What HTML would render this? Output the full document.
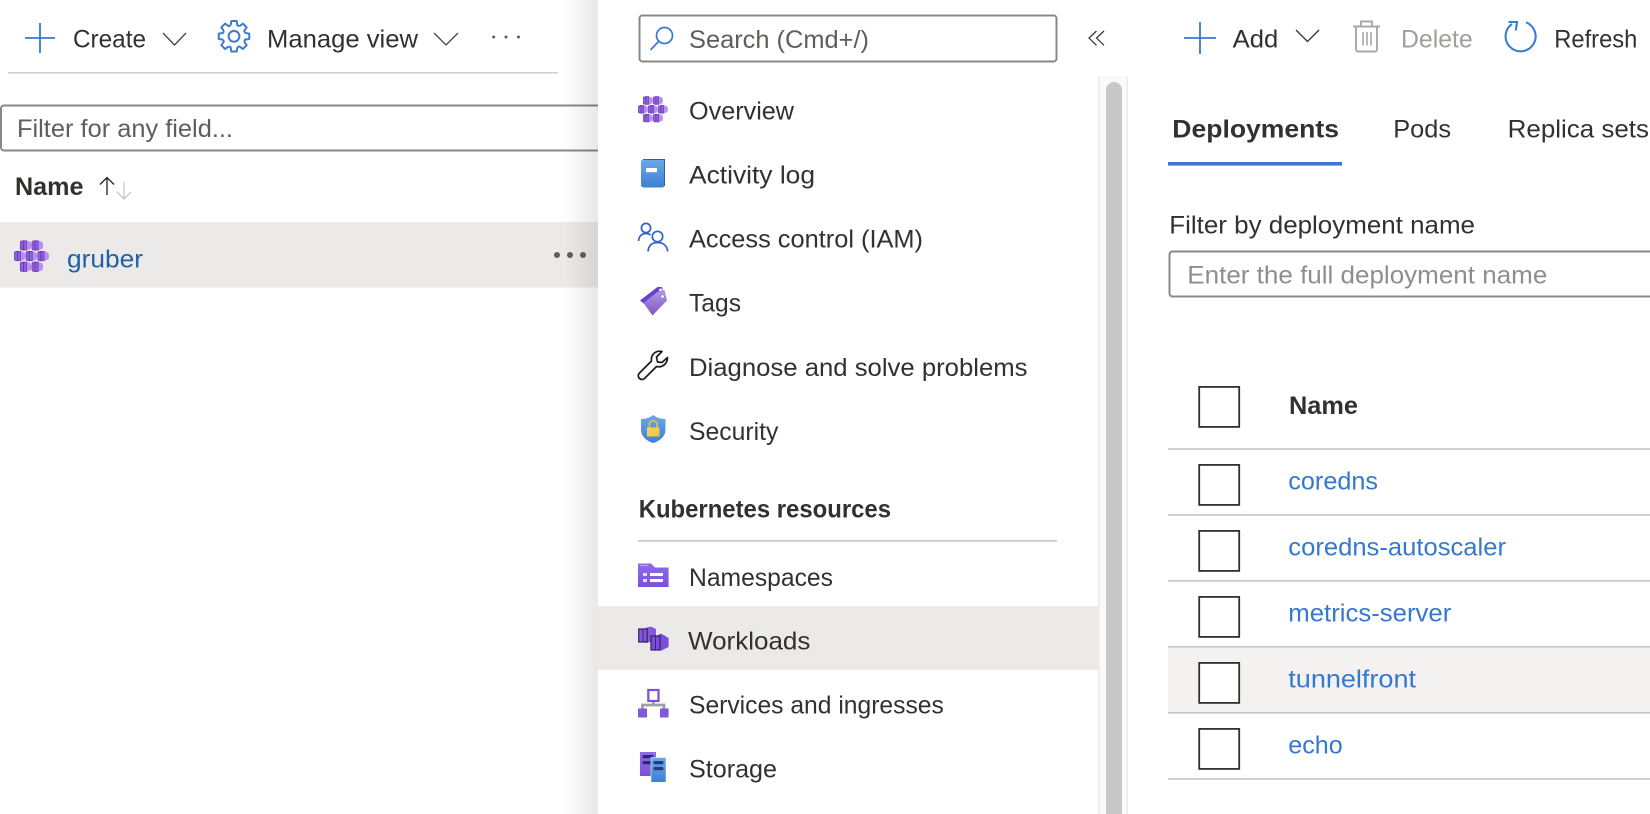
<!DOCTYPE html>
<html lang="en">
<head>
<meta charset="utf-8">
<title>Kubernetes services - Workloads</title>
<style>
html,body{margin:0;padding:0;background:#fff;width:1650px;height:814px;overflow:hidden}
svg{display:block}
text{font-family:"Liberation Sans",Arial,sans-serif;font-size:25px;fill:#323130}
.b{font-weight:700}
.l{fill:#3578d0}
.g{fill:#605e5c}
</style>
</head>
<body>
<svg width="1650" height="814" viewBox="0 0 1650 814" xmlns="http://www.w3.org/2000/svg">
<defs>
<linearGradient id="sh" x1="0" x2="1" y1="0" y2="0"><stop offset="0" stop-color="#000" stop-opacity="0"/><stop offset="1" stop-color="#000" stop-opacity=".09"/></linearGradient>
<linearGradient id="pur" x1="0" x2="0" y1="0" y2="1"><stop offset="0" stop-color="#8f6ce6"/><stop offset="1" stop-color="#7a52da"/></linearGradient>
<linearGradient id="tag" x1="0" x2="0" y1="0" y2="1"><stop offset="0" stop-color="#b09ade"/><stop offset="1" stop-color="#8355c8"/></linearGradient>
<linearGradient id="blu" x1="0" x2="0" y1="0" y2="1"><stop offset="0" stop-color="#6aa8ee"/><stop offset="1" stop-color="#3f7fd2"/></linearGradient>
<linearGradient id="yel" x1="0" x2="1" y1="0" y2="1"><stop offset="0" stop-color="#f7d85e"/><stop offset="1" stop-color="#edc040"/></linearGradient>
<g id="c">
<path d="M2 .6H6.5L9.4 1.8L10 4.5L9.4 7.2L6.5 8.4H2z" fill="#bb8cf2"/>
<path d="M.4 1.3L2 .6H5.6V8.4H2L.4 7.7z" fill="#8f62da" stroke="#6238ae" stroke-width=".6"/>
<path d="M3 1V8" stroke="#532e9c" stroke-width=".6"/>
</g>
<g id="kube">
<use href="#c" x="5" y="0"/><use href="#c" x="15" y="0"/>
<use href="#c" x="0" y="8.8"/><use href="#c" x="10" y="8.8"/><use href="#c" x="20" y="8.8"/>
<use href="#c" x="5" y="17.6"/><use href="#c" x="15" y="17.6"/>
</g>
<polyline id="tooth" points="11,-3.36 15.26,-2.69 15.26,2.69 11,3.36 10.15,5.4" fill="none" stroke="#3b7cd2" stroke-width="2" stroke-linejoin="round"/>
</defs>

<!-- left pane -->
<path d="M25 38H55M40 23V53" stroke="#3a78d0" stroke-width="1.8" fill="none"/>
<text x="73" y="47.5" textLength="73" lengthAdjust="spacingAndGlyphs">Create</text>
<polyline points="163,33 174.5,45 186,33" fill="none" stroke="#484644" stroke-width="1.3"/>
<g transform="translate(234,36.3)">
<use href="#tooth"/><use href="#tooth" transform="rotate(45)"/><use href="#tooth" transform="rotate(90)"/><use href="#tooth" transform="rotate(135)"/><use href="#tooth" transform="rotate(180)"/><use href="#tooth" transform="rotate(225)"/><use href="#tooth" transform="rotate(270)"/><use href="#tooth" transform="rotate(315)"/>
<circle r="5.4" fill="none" stroke="#3b7cd2" stroke-width="2"/>
</g>
<text x="267" y="47.5" textLength="151" lengthAdjust="spacingAndGlyphs">Manage view</text>
<polyline points="434,33 446,45 458,33" fill="none" stroke="#484644" stroke-width="1.3"/>
<circle cx="493.7" cy="37" r="1.5" fill="#605e5c"/><circle cx="506" cy="37" r="1.5" fill="#605e5c"/><circle cx="518.5" cy="37" r="1.5" fill="#605e5c"/>
<rect x="8" y="72" width="550" height="1.6" fill="#d2d0ce"/>

<rect x="1" y="105.5" width="640" height="45" rx="3" fill="#fff" stroke="#8a8886" stroke-width="2"/>
<text x="17" y="137" textLength="216" lengthAdjust="spacingAndGlyphs" class="g">Filter for any field...</text>

<text x="15" y="195" textLength="68.5" lengthAdjust="spacingAndGlyphs" class="b">Name</text>
<path d="M107 195V177.5M100 184.5L107 177.5L114 184.5" fill="none" stroke="#201f1e" stroke-width="1.3"/>
<path d="M124 182V199M117 192L124 199L131 192" fill="none" stroke="#c8c6c4" stroke-width="1.3"/>

<rect x="0" y="222" width="600" height="65.5" fill="#ebeae9"/>
<use href="#kube" transform="translate(14,240) scale(1.17,1.21)"/>
<text x="67" y="267.7" textLength="76" lengthAdjust="spacingAndGlyphs" style="fill:#2260a8">gruber</text>
<circle cx="557" cy="255" r="3" fill="#605e5c"/><circle cx="570" cy="255" r="3" fill="#605e5c"/><circle cx="583" cy="255" r="3" fill="#605e5c"/>

<!-- shadow -->
<rect x="563" y="0" width="35" height="814" fill="url(#sh)"/>
<rect x="598" y="0" width="1052" height="814" fill="#fff"/>

<!-- nav -->
<rect x="639.5" y="15.5" width="417" height="46" rx="3" fill="#fff" stroke="#8a8886" stroke-width="2"/>
<circle cx="664.5" cy="35.5" r="8" fill="none" stroke="#3a78d0" stroke-width="1.7"/>
<path d="M658.8 41.2L650.5 50" stroke="#3a78d0" stroke-width="1.7" fill="none"/>
<text x="689" y="48" textLength="180" lengthAdjust="spacingAndGlyphs" class="g">Search (Cmd+/)</text>
<path d="M1096.5 31L1089 38L1096.5 45.3M1104 31L1096.5 38L1104 45.3" fill="none" stroke="#323130" stroke-width="1.2"/>

<rect x="1098" y="76" width="30" height="738" fill="#fafafa"/>
<rect x="1098" y="76" width="1.6" height="738" fill="#ececec"/>
<rect x="1126.4" y="76" width="1.6" height="738" fill="#ececec"/>
<rect x="1106" y="82" width="16" height="750" rx="8" fill="#c8c8c8"/>

<rect x="598" y="606" width="500" height="64" fill="#ebeae8"/>

<use href="#kube" transform="translate(638,96)"/>
<text x="689" y="119.3" textLength="105" lengthAdjust="spacingAndGlyphs">Overview</text>

<rect x="641" y="159.5" width="23.5" height="28" rx="2.5" fill="url(#blu)"/>
<path d="M643 159.5H664.5V186" fill="none" stroke="#2f5f9e" stroke-width="1"/>
<rect x="646" y="168" width="11" height="4.2" fill="#fff"/>
<text x="689" y="183.3" textLength="126" lengthAdjust="spacingAndGlyphs">Activity log</text>

<g fill="none" stroke="#2f62cc" stroke-width="1.7">
<circle cx="646" cy="228" r="4.6"/>
<path d="M638.5 241C639 236 642 233.5 646 233.5C648 233.5 649.5 234 650.5 235"/>
<circle cx="657.5" cy="236.5" r="5.2"/>
<path d="M648 251.5C648.5 245.5 652 242.5 657.5 242.5C663 242.5 667 245.5 667.8 251.5"/>
</g>
<text x="689" y="247.7" textLength="234" lengthAdjust="spacingAndGlyphs">Access control (IAM)</text>

<path d="M640 300.5L657.5 287H662L664 296L648 307z" fill="#6b3fd4"/>
<path d="M643.5 303L658 291.5L664.5 290L667 300.5L652.5 315.5z" fill="url(#tag)"/>
<circle cx="660.5" cy="290" r="1.7" fill="#fff" stroke="#6b3fd4" stroke-width=".5"/>
<circle cx="662.5" cy="296.5" r="1.7" fill="#fff" stroke="#8f70cc" stroke-width=".5"/>
<text x="689" y="311.4" textLength="52" lengthAdjust="spacingAndGlyphs">Tags</text>

<path d="M662 351.5C656 350 650.5 354.5 651.5 361L639.5 373A3.6 3.6 0 0 0 644.5 378.5L656.5 366.5C662.5 368 667.5 363.5 667.5 357.5L662 362.5L657.5 362L656.5 357Z" fill="#fff" stroke="#1a1a1a" stroke-width="1.7" stroke-linejoin="round"/>
<text x="689" y="375.8" textLength="338.5" lengthAdjust="spacingAndGlyphs">Diagnose and solve problems</text>

<path d="M653.2 415C657 418 661 419 665.5 419V430C665.5 436 660 441 653.2 443C646.5 441 641 436 641 430V419C645.5 419 649.5 418 653.2 415Z" fill="url(#blu)"/>
<path d="M649.5 428V424.5A3.7 3.7 0 0 1 657 424.5V428" fill="none" stroke="#e8b93a" stroke-width="1.8"/>
<rect x="647" y="427.5" width="12.5" height="9" fill="url(#yel)"/>
<text x="689" y="440" textLength="89.4" lengthAdjust="spacingAndGlyphs">Security</text>

<text x="638.7" y="517.3" textLength="252.3" lengthAdjust="spacingAndGlyphs" class="b">Kubernetes resources</text>
<rect x="638" y="540" width="419" height="1.6" fill="#c8c6c4"/>

<path d="M638 563.5H651L655 567.5H668.6V587H638z" fill="url(#pur)"/>
<path d="M640 565.5H648" stroke="#b8a2ee" stroke-width="1.2"/>
<path d="M650 574.5H663M650 580.5H663" stroke="#fff" stroke-width="3"/>
<path d="M643 574.5H647M643 580.5H647" stroke="#e6ddfa" stroke-width="3"/>
<text x="689" y="586" textLength="144" lengthAdjust="spacingAndGlyphs">Namespaces</text>

<path d="M645 628L651 626.5L656 629V641L645 643z" fill="#8458d8"/>
<rect x="638.7" y="629" width="8.5" height="13" fill="#8458d8" stroke="#33206e" stroke-width="1.2"/>
<path d="M643 629V642" stroke="#33206e" stroke-width=".9"/>
<path d="M657 635.5L661 633.5L668.6 638V647L661 650.7L657 650z" fill="#7a4fd8"/>
<rect x="651" y="636" width="9" height="14" fill="#7a4fd8" stroke="#33206e" stroke-width="1.2"/>
<path d="M655.5 636V650" stroke="#33206e" stroke-width=".9"/>
<text x="688" y="649.3" textLength="122.4" lengthAdjust="spacingAndGlyphs">Workloads</text>

<path d="M653.3 701V705M642.5 709V705H664V709" fill="none" stroke="#a0a0a0" stroke-width="2.8"/>
<rect x="648.3" y="690" width="10.2" height="11" fill="#fff" stroke="#7a4fd8" stroke-width="2.2"/>
<rect x="638" y="708.5" width="9" height="9" fill="#7f58dc"/>
<rect x="660" y="708.5" width="8.6" height="9" fill="#7f58dc"/>
<text x="689" y="713.3" textLength="254.8" lengthAdjust="spacingAndGlyphs">Services and ingresses</text>

<rect x="640" y="752" width="16" height="24" fill="url(#pur)"/>
<rect x="642.5" y="755" width="11" height="3.2" rx="1.6" fill="#2f2a6e"/>
<rect x="642.5" y="761" width="11" height="3.2" rx="1.6" fill="#2f2a6e"/>
<rect x="651" y="757.5" width="15" height="24.8" fill="url(#blu)" stroke="#fff" stroke-width=".5"/>
<rect x="653.5" y="761" width="10" height="3.2" rx="1.6" fill="#1e3f7a"/>
<rect x="653.5" y="767" width="10" height="3.2" rx="1.6" fill="#1e3f7a"/>
<text x="689" y="777.3" textLength="88" lengthAdjust="spacingAndGlyphs">Storage</text>

<!-- right pane toolbar -->
<path d="M1184 38H1216M1200 22V54" stroke="#3a78d0" stroke-width="1.8" fill="none"/>
<text x="1232.7" y="47.5" textLength="45.6" lengthAdjust="spacingAndGlyphs">Add</text>
<polyline points="1296,30 1307.5,41.5 1319,30" fill="none" stroke="#323130" stroke-width="1.3"/>
<g fill="none" stroke="#a8a8a8" stroke-width="1.9">
<path d="M1353 26.5H1380"/>
<path d="M1361 26V21.5H1372V26"/>
<path d="M1356 26.5V49.5A2 2 0 0 0 1358 51.5H1375A2 2 0 0 0 1377 49.5V26.5"/>
<path d="M1363 32V45.5M1367 32V45.5M1371 32V45.5" stroke-width="1.6"/>
</g>
<text x="1401" y="47.5" textLength="71.7" lengthAdjust="spacingAndGlyphs" style="fill:#a19f9d">Delete</text>
<path d="M1526 22.3A15 15 0 1 1 1512 24" fill="none" stroke="#3a7ed4" stroke-width="2.1"/>
<path d="M1508.5 22H1517L1515.8 30.5" fill="none" stroke="#3a7ed4" stroke-width="2.1"/>
<text x="1554.3" y="47.5" textLength="83" lengthAdjust="spacingAndGlyphs">Refresh</text>

<!-- tabs -->
<text x="1172.3" y="137.7" textLength="166.7" lengthAdjust="spacingAndGlyphs" class="b">Deployments</text>
<text x="1393.3" y="137.7" textLength="57.7" lengthAdjust="spacingAndGlyphs">Pods</text>
<text x="1507.7" y="137.7" textLength="141.3" lengthAdjust="spacingAndGlyphs">Replica sets</text>
<rect x="1168" y="162" width="174" height="3.6" fill="#3a78d0"/>

<text x="1169.3" y="233.5" textLength="305.7" lengthAdjust="spacingAndGlyphs">Filter by deployment name</text>
<rect x="1169.5" y="251.5" width="500" height="45" rx="3" fill="#fff" stroke="#8a8886" stroke-width="2"/>
<text x="1187.3" y="283.3" textLength="360" lengthAdjust="spacingAndGlyphs" style="fill:#8f8e8d">Enter the full deployment name</text>

<!-- table -->
<rect x="1199.2" y="386.9" width="40" height="40" fill="#fff" stroke="#323130" stroke-width="1.8"/>
<text x="1289" y="414" textLength="69" lengthAdjust="spacingAndGlyphs" class="b">Name</text>
<rect x="1168" y="448.2" width="482" height="1.6" fill="#c8c6c4"/>

<rect x="1199.2" y="464.9" width="40" height="40" fill="#fff" stroke="#323130" stroke-width="1.8"/>
<text x="1288.3" y="489.3" textLength="89.7" lengthAdjust="spacingAndGlyphs" class="l">coredns</text>
<rect x="1168" y="514.2" width="482" height="1.6" fill="#c8c6c4"/>

<rect x="1199.2" y="530.9" width="40" height="40" fill="#fff" stroke="#323130" stroke-width="1.8"/>
<text x="1288.3" y="555.3" textLength="217.7" lengthAdjust="spacingAndGlyphs" class="l">coredns-autoscaler</text>
<rect x="1168" y="580" width="482" height="1.6" fill="#c8c6c4"/>

<rect x="1199.2" y="596.9" width="40" height="40" fill="#fff" stroke="#323130" stroke-width="1.8"/>
<text x="1288.3" y="621.7" textLength="163" lengthAdjust="spacingAndGlyphs" class="l">metrics-server</text>

<rect x="1168" y="647" width="482" height="65.5" fill="#f3f2f1"/>
<rect x="1168" y="646" width="482" height="1.6" fill="#c8c6c4"/>
<rect x="1199.2" y="662.9" width="40" height="40" fill="#fff" stroke="#323130" stroke-width="1.8"/>
<text x="1288.3" y="687.7" textLength="127.7" lengthAdjust="spacingAndGlyphs" class="l">tunnelfront</text>
<rect x="1168" y="712" width="482" height="1.6" fill="#c8c6c4"/>

<rect x="1199.2" y="728.9" width="40" height="40" fill="#fff" stroke="#323130" stroke-width="1.8"/>
<text x="1288.3" y="753.7" textLength="54.4" lengthAdjust="spacingAndGlyphs" class="l">echo</text>
<rect x="1168" y="778.2" width="482" height="1.6" fill="#c8c6c4"/>
</svg>
</body>
</html>
